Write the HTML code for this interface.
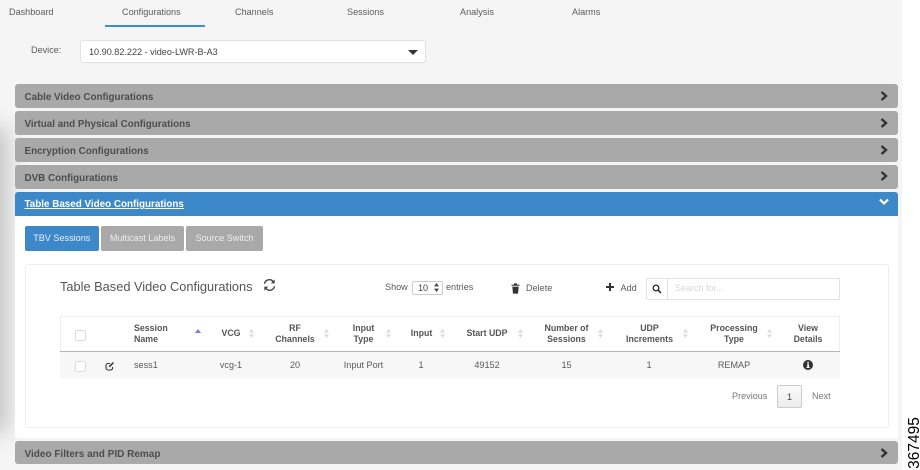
<!DOCTYPE html>
<html><head><meta charset="utf-8"><style>
html,body{margin:0;padding:0;width:920px;height:470px;overflow:hidden;background:#fff}
body{position:relative;font-family:"Liberation Sans",sans-serif;color:#555}
#w{position:absolute;left:0;top:0;width:920px;height:470px;filter:blur(.35px)}
.a{position:absolute;white-space:nowrap}
.t{position:absolute;white-space:nowrap;font-size:9.1px;line-height:12px;color:#5a5a5a}
.c{transform:translateX(-50%);text-align:center}
.bar{position:absolute;left:15px;width:883px;height:24px;background:#a9a9a9;border-radius:3px;font-size:9.85px;font-weight:bold;line-height:27.5px;color:#4d4d4d;text-indent:9.5px}
.th{position:absolute;white-space:nowrap;font-size:8.8px;line-height:11px;font-weight:bold;color:#555;text-align:center;transform:translateX(-50%)}
.so{position:absolute;width:5px;height:9px}
.tab{position:absolute;top:226px;height:24.5px;border-radius:2px;background:#a9a9a9;color:#eee;font-size:9.1px;line-height:25px;text-align:center}
</style></head><body><div id="w">
<div class="a" style="left:0;top:0;width:902px;height:470px;background:#f5f5f5"></div>
<div class="a" style="left:-14px;top:135px;width:14px;height:290px;box-shadow:0 0 22px 8px #c4c4c4"></div>

<div class="t" style="left:9px;top:6px;">Dashboard</div>
<div class="t" style="left:122px;top:6px;">Configurations</div>
<div class="t" style="left:235px;top:6px;">Channels</div>
<div class="t" style="left:347px;top:6px;">Sessions</div>
<div class="t" style="left:460px;top:6px;">Analysis</div>
<div class="t" style="left:572px;top:6px;">Alarms</div>
<div class="a" style="left:105px;top:25px;width:100px;height:2px;background:#3d8fc9"></div>

<div class="t" style="left:31px;top:44px;">Device:</div>
<div class="a" style="left:80px;top:40px;width:344px;height:21px;background:#fff;border:1px solid #e2e2e2;border-radius:3px"></div>
<div class="t" style="left:89px;top:45.5px;color:#444;">10.90.82.222 - video-LWR-B-A3</div>
<svg class="a" style="left:408px;top:50px" width="10" height="5"><path d="M0 0H10L5 5Z" fill="#333"/></svg>

<div class="bar" style="top:84px">Cable Video Configurations</div>
<div class="bar" style="top:111px">Virtual and Physical Configurations</div>
<div class="bar" style="top:138px">Encryption Configurations</div>
<div class="bar" style="top:165px">DVB Configurations</div>
<div class="a" style="left:15px;top:216px;width:883px;height:222px;background:#fff"></div>
<div class="bar" style="top:192px;background:#3d88c9;color:#fff;border-radius:3px 3px 0 0;line-height:25.5px"><span style="text-decoration:underline">Table Based Video Configurations</span></div>
<div class="bar" style="top:441px;height:23px;font-size:10px">Video Filters and PID Remap</div>

<svg class="a" style="left:880px;top:91px" width="8" height="10"><path d="M1.5 1L6 5L1.5 9" fill="none" stroke="#333" stroke-width="2.4"/></svg>
<svg class="a" style="left:880px;top:118px" width="8" height="10"><path d="M1.5 1L6 5L1.5 9" fill="none" stroke="#333" stroke-width="2.4"/></svg>
<svg class="a" style="left:880px;top:145px" width="8" height="10"><path d="M1.5 1L6 5L1.5 9" fill="none" stroke="#333" stroke-width="2.4"/></svg>
<svg class="a" style="left:880px;top:171px" width="8" height="10"><path d="M1.5 1L6 5L1.5 9" fill="none" stroke="#333" stroke-width="2.4"/></svg>
<svg class="a" style="left:879px;top:198px" width="10" height="8"><path d="M1 1.5L5 5.5L9 1.5" fill="none" stroke="#fff" stroke-width="2.2"/></svg>
<svg class="a" style="left:880px;top:448px" width="8" height="10"><path d="M1.5 1L6 5L1.5 9" fill="none" stroke="#333" stroke-width="2.4"/></svg>

<div class="tab" style="left:24.5px;width:74.5px;background:#3d88c9;color:#e8f1f8">TBV Sessions</div>
<div class="tab" style="left:101px;width:83px">Multicast Labels</div>
<div class="tab" style="left:186px;width:77px">Source Switch</div>

<div class="a" style="left:25px;top:264px;width:861.5px;height:162px;border:1px solid #eee;border-radius:3px;background:#fff"></div>
<div class="a" style="left:60px;top:278.5px;font-size:12.8px;line-height:16px;color:#555">Table Based Video Configurations</div>
<svg class="a" style="left:263px;top:278px" width="13" height="14" viewBox="0 0 14 14"><path d="M1.6 5.6A5.3 5.3 0 0 1 11 3.4M12.4 8.4A5.3 5.3 0 0 1 3 10.6" fill="none" stroke="#444" stroke-width="1.5"/><path d="M12.6 1V5.2H8.4ZM1.4 13V8.8H5.6Z" fill="#444"/></svg>

<div class="t" style="left:385px;top:281px">Show</div>
<div class="a" style="left:412px;top:281px;width:29px;height:12px;border:1px solid #ccc;border-radius:2px;background:#fff;font-size:9.1px;line-height:12px;color:#444;text-indent:5px">10</div>
<svg class="a" style="left:434px;top:283px" width="5" height="9"><path d="M2.5 0L5 3.4H0ZM2.5 9L0 5.6H5Z" fill="#444"/></svg>
<div class="t" style="left:446px;top:281px">entries</div>

<svg class="a" style="left:511px;top:283px" width="9" height="11" viewBox="0 0 9 11"><path d="M0.5 1.6H8.5V2.8H0.5ZM3 0.4H6V1.6H3ZM1.3 3.6H7.7L7 10.6H2Z" fill="#333"/></svg>
<div class="t" style="left:526px;top:282px">Delete</div>
<svg class="a" style="left:606px;top:283px" width="8" height="8"><path d="M4 0V8M0 4H8" stroke="#333" stroke-width="2"/></svg>
<div class="t" style="left:620.5px;top:282px">Add</div>

<div class="a" style="left:646px;top:278px;width:192px;height:20px;border:1px solid #e2e2e2;border-radius:2px;background:#fff"></div>
<div class="a" style="left:666.5px;top:278px;width:1px;height:21px;background:#e2e2e2"></div>
<svg class="a" style="left:652px;top:284px" width="10" height="10" viewBox="0 0 10 10"><circle cx="4" cy="4" r="2.8" fill="none" stroke="#333" stroke-width="1.4"/><path d="M6 6L9 9" stroke="#333" stroke-width="1.6"/></svg>
<div class="t" style="left:675px;top:282px;font-size:9px;color:#d8d8d8">Search for...</div>

<div class="a" style="left:60px;top:316px;width:780px;height:35px;background:#fff;border:1px solid #eee;border-bottom:0;box-sizing:border-box"></div>
<div class="a" style="left:60px;top:351px;width:780px;height:1px;background:#b5b5b5"></div>
<div class="a" style="left:60px;top:352px;width:780px;height:26px;background:#f7f7f7"></div>

<div class="a" style="left:75px;top:330px;width:9px;height:9px;border:1px solid #ddd;border-radius:2px;background:#fff"></div>
<div class="a" style="left:75px;top:361px;width:9px;height:9px;border:1px solid #ddd;border-radius:2px;background:#fff"></div>
<svg class="a" style="left:105px;top:361px" width="10" height="10" viewBox="0 0 10 10"><path d="M7.5 6V7.5A2 2 0 0 1 5.5 9H3A2 2 0 0 1 1 7V4.5A2 2 0 0 1 3 2.5H5" fill="none" stroke="#333" stroke-width="1.1"/><path d="M3.8 6.2L4.2 4.6L8 1L9 2L5.4 5.8Z" fill="#333"/></svg>

<div class="th" style="left:134px;top:323px;text-align:left;transform:none">Session<br>Name</div>
<svg class="a" style="left:195px;top:329px" width="6" height="4"><path d="M3 0L6 4H0Z" fill="#7b7bc8"/></svg>
<div class="th" style="left:231px;top:328px">VCG</div>
<div class="th" style="left:295px;top:323px">RF<br>Channels</div>
<div class="th" style="left:363.5px;top:323px">Input<br>Type</div>
<div class="th" style="left:421.5px;top:328px">Input</div>
<div class="th" style="left:487px;top:328px">Start UDP</div>
<div class="th" style="left:566.5px;top:323px">Number of<br>Sessions</div>
<div class="th" style="left:649.5px;top:323px">UDP<br>Increments</div>
<div class="th" style="left:734px;top:323px">Processing<br>Type</div>
<div class="th" style="left:808px;top:323px">View<br>Details</div>

<svg class="so" style="left:249px;top:329px" viewBox="0 0 5 9"><path d="M2.5 0L5 3.6H0ZM2.5 9L0 5.4H5Z" fill="#dcdcdc"/></svg>
<svg class="so" style="left:324px;top:329px" viewBox="0 0 5 9"><path d="M2.5 0L5 3.6H0ZM2.5 9L0 5.4H5Z" fill="#dcdcdc"/></svg>
<svg class="so" style="left:386px;top:329px" viewBox="0 0 5 9"><path d="M2.5 0L5 3.6H0ZM2.5 9L0 5.4H5Z" fill="#dcdcdc"/></svg>
<svg class="so" style="left:439.5px;top:329px" viewBox="0 0 5 9"><path d="M2.5 0L5 3.6H0ZM2.5 9L0 5.4H5Z" fill="#dcdcdc"/></svg>
<svg class="so" style="left:517.5px;top:329px" viewBox="0 0 5 9"><path d="M2.5 0L5 3.6H0ZM2.5 9L0 5.4H5Z" fill="#dcdcdc"/></svg>
<svg class="so" style="left:598px;top:329px" viewBox="0 0 5 9"><path d="M2.5 0L5 3.6H0ZM2.5 9L0 5.4H5Z" fill="#dcdcdc"/></svg>
<svg class="so" style="left:682.5px;top:329px" viewBox="0 0 5 9"><path d="M2.5 0L5 3.6H0ZM2.5 9L0 5.4H5Z" fill="#dcdcdc"/></svg>
<svg class="so" style="left:767px;top:329px" viewBox="0 0 5 9"><path d="M2.5 0L5 3.6H0ZM2.5 9L0 5.4H5Z" fill="#dcdcdc"/></svg>

<div class="t" style="left:134px;top:359px">sess1</div>
<div class="t c" style="left:231px;top:359px">vcg-1</div>
<div class="t c" style="left:295px;top:359px">20</div>
<div class="t c" style="left:363.5px;top:359px">Input Port</div>
<div class="t c" style="left:421px;top:359px">1</div>
<div class="t c" style="left:487px;top:359px">49152</div>
<div class="t c" style="left:566.5px;top:359px">15</div>
<div class="t c" style="left:649px;top:359px">1</div>
<div class="t c" style="left:734px;top:359px">REMAP</div>
<svg class="a" style="left:803px;top:360px" width="10" height="10" viewBox="0 0 10 10"><circle cx="5" cy="5" r="5" fill="#333"/><rect x="4.2" y="4.2" width="1.8" height="3.4" fill="#fff"/><rect x="3.6" y="7" width="3" height="1" fill="#fff"/><rect x="4.2" y="2" width="1.7" height="1.5" fill="#fff"/></svg>

<div class="t" style="left:732px;top:390px;color:#777">Previous</div>
<div class="a" style="left:777px;top:385px;width:23px;height:21px;border:1px solid #ccc;border-radius:2px;background:linear-gradient(#fbfbfb,#ececec);font-size:9.1px;line-height:22px;text-align:center;color:#444">1</div>
<div class="t" style="left:812px;top:390px;color:#777">Next</div>

<div class="a" style="left:885px;top:436px;width:60px;height:14px;font-size:15.5px;line-height:14px;color:#000;transform:rotate(-90deg);transform-origin:center;text-align:center">367495</div>
</div></body></html>
